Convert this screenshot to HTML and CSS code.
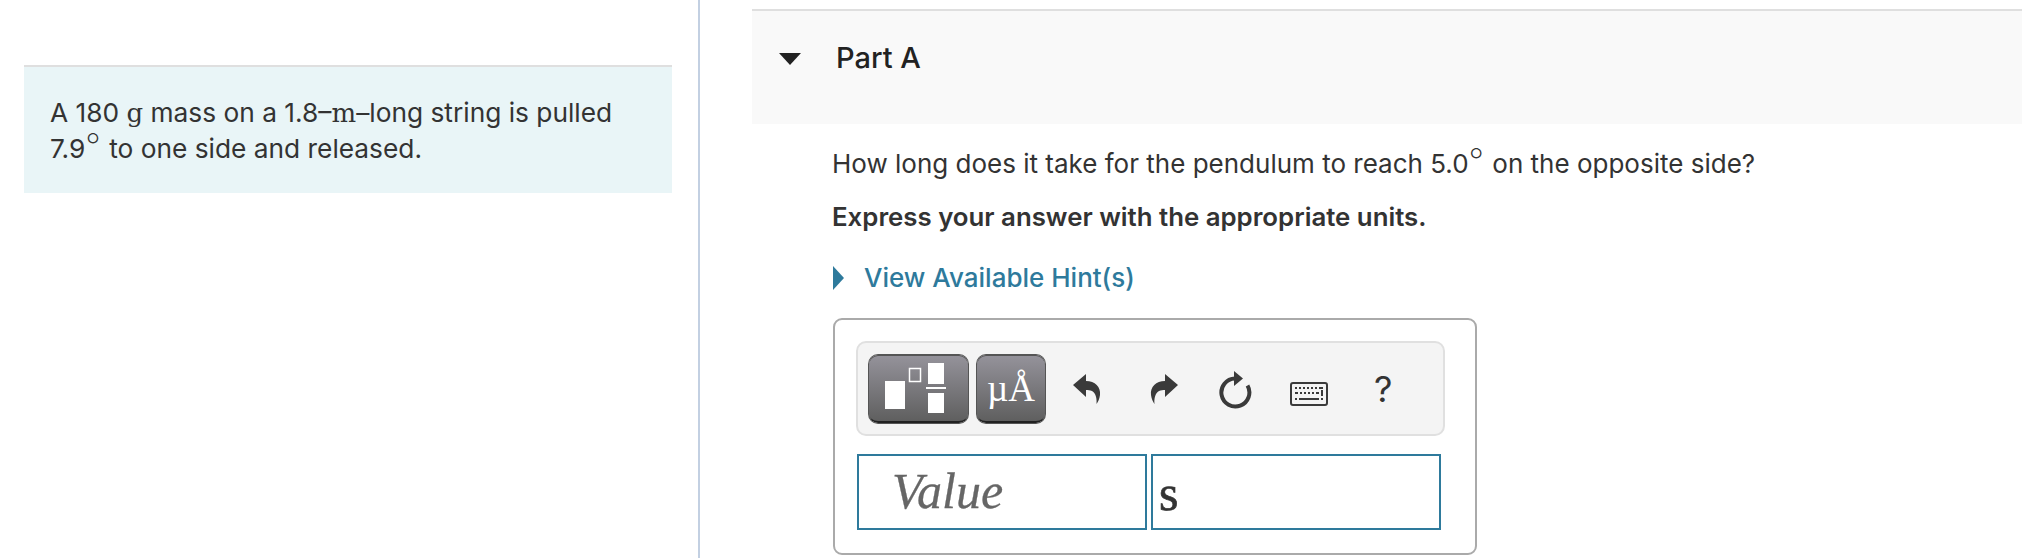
FILE: index.html
```html
<!DOCTYPE html>
<html lang="en">
<head>
    <meta charset="UTF-8">
    <meta name="viewport" content="width=device-width, initial-scale=1.0">
    <title>Part A</title>
    <link rel="stylesheet" href="styles.css">
</head>
<body>

    <div class="page">
        <!-- Problem intro -->
        <div class="intro-column">
            <div class="intro">
                A 180 <span class="math">g</span> mass on a 1.8–<span class="math">m</span>–long string is pulled
                7.9<span class="deg">°</span> to one side and released.
            </div>
        </div>

        <div class="part-column">
            <div class="part-header">
                <span class="caret-down"></span>
                <h2>Part A</h2>
            </div>

            <div class="part-body">
                <p class="question">How long does it take for the pendulum to reach 5.0<span class="deg">°</span> on the opposite side?</p>
                <p class="instruction">Express your answer with the appropriate units.</p>

                <a class="hint" href="#"><span class="caret-right"></span>View Available Hint(s)</a>

                <div class="answer-box">
                    <div class="toolbar">
                        <button class="tool tool-wide" aria-label="Templates">
                            <svg width="99" height="68" viewBox="0 0 99 68" fill="#fff">
                                <rect x="16" y="26" width="20" height="28"/>
                                <rect x="40.500" y="13.500" width="11" height="13" fill="none" stroke="#fff" stroke-width="1.5"/>
                                <rect x="59" y="8" width="16" height="21"/>
                                <rect x="57" y="32" width="20" height="2"/>
                                <rect x="59" y="38" width="16" height="20"/>
                            </svg>
                        </button>
                        <button class="tool tool-units">µÅ</button>

                        <svg class="icon icon-undo" width="30" height="32" viewBox="0 0 30 32" fill="#3a3a3a">
                            <path d="M1 12 L14 1 V8 C23 8 29 14 28 22 C27.500 26 26 29 24.500 31 C25 26 24 20 20 18 C18 17 16 17 14 17 V24 Z"/>
                        </svg>
                        <svg class="icon icon-redo" width="30" height="32" viewBox="0 0 30 32" fill="#3a3a3a">
                            <path d="M29 12 L16 1 V8 C7 8 1 14 2 22 C2.500 26 4 29 5.500 31 C5 26 6 20 10 18 C12 17 14 17 16 17 V24 Z"/>
                        </svg>
                        <svg class="icon icon-reset" width="34" height="40" viewBox="0 0 34 40" fill="none">
                            <path d="M17 9.500 A14 14 0 1 0 29.500 16.500" stroke="#3a3a3a" stroke-width="4"/>
                            <path d="M16 2 L25 9.500 L16 17 Z" fill="#3a3a3a"/>
                        </svg>
                        <svg class="icon icon-keyboard" width="38" height="24" viewBox="0 0 38 24" fill="#3a3a3a">
                            <rect x="1" y="1" width="36" height="22" rx="2" fill="none" stroke="#3a3a3a" stroke-width="2"/>
                            <path d="M5 5h2v2H5zM9 5h2v2H9zM13 5h2v2h-2zM17 5h2v2h-2zM21 5h2v2h-2zM25 5h2v2h-2zM29 5h4v2h-4z"/>
                            <path d="M5 10h3v2H5zM10 10h2v2h-2zM14 10h2v2h-2zM18 10h2v2h-2zM22 10h2v2h-2zM26 10h3v2h-3zM31 8h2v6h-2z"/>
                            <path d="M5 16h2v2H5zM9 16h20v2H9zM31 16h2v2h-2z"/>
                        </svg>
                        <span class="help">?</span>
                    </div>

                    <div class="answer-fields">
                        <div class="field field-value">Value</div>
                        <div class="field field-units">s</div>
                    </div>
                </div>
            </div>
        </div>
    </div>

</body>
</html>
```

FILE: styles.css
```css
body {
    margin: 0;
    font-family: Inter, "Liberation Sans", sans-serif;
    color: #333;
    background-color: #fff;
    overflow: hidden;
}

.page {
    display: flex;
    height: 558px;
}

.intro-column {
    width: 700px;
    box-sizing: border-box;
    padding: 65px 26px 0 24px;
    border-right: 2px solid #c3d0e2;
    flex-shrink: 0;
}

.intro {
    background-color: #e9f5f7;
    border-top: 2px solid #dfdfdf;
    padding: 28px 26px 24px;
    font-size: 26.3px;
    line-height: 36px;
    height: 74px;
}

.math {
    font-family: "DejaVu Serif", serif;
    font-size: 26px;
    line-height: 0;
}

.deg {
    font-size: 34px;
    line-height: 0;
    margin-right: 1px;
    font-weight: 200;
}

.part-column {
    flex: 1;
    padding: 9px 0 0 52px;
}

.part-header {
    display: flex;
    align-items: flex-start;
    height: 113px;
    background-color: #f9f9f9;
    border-top: 2px solid #dfdfdf;
}

.part-header h2 {
    margin: 31px 0 0 35px;
    font-size: 29px;
    line-height: 32px;
    font-weight: 500;
    color: #222;
}

.caret-down {
    width: 0;
    height: 0;
    margin: 42px 0 0 27px;
    border-left: 11px solid transparent;
    border-right: 11px solid transparent;
    border-top: 12px solid #222;
}

.part-body {
    padding: 0 0 0 80px;
}

.question {
    margin: 21px 0 0;
    font-size: 26px;
    line-height: 37px;
}

.instruction {
    margin: 16px 0 0;
    font-size: 25.8px;
    line-height: 37px;
    font-weight: 600;
}

.hint {
    display: flex;
    align-items: center;
    margin-top: 24px;
    font-size: 26px;
    line-height: 37px;
    font-weight: 500;
    color: #2e7a9c;
    text-decoration: none;
}

.caret-right {
    width: 0;
    height: 0;
    margin: 0 20px 0 1px;
    border-top: 12px solid transparent;
    border-bottom: 12px solid transparent;
    border-left: 11px solid #2e7a9c;
}

.answer-box {
    width: 644px;
    height: 237px;
    box-sizing: border-box;
    margin: 22px 0 0 1px;
    padding: 21px 30px 0 21px;
    border: 2px solid #aaa;
    border-radius: 9px;
}

.toolbar {
    display: flex;
    align-items: center;
    width: 589px;
    height: 95px;
    box-sizing: border-box;
    padding: 0 11px;
    background-color: #f4f4f4;
    border: 2px solid #e0e0e0;
    border-radius: 10px;
}

.tool {
    height: 68px;
    padding: 0;
    border: 0;
    border-bottom: 2px solid #222;
    border-radius: 9px;
    background: linear-gradient(#95939b, #5f5f5f);
    box-shadow: inset 0 1px 0 #555, 0 0 0 1px #555;
    color: #fff;
    box-sizing: border-box;
}

.tool svg {
    display: block;
}

.tool-wide {
    width: 99px;
}

.tool-units {
    width: 68px;
    margin-left: 9px;
    font-family: "Liberation Serif", serif;
    font-size: 37px;
    line-height: 60px;
    padding-top: 2px;
}

.icon {
    flex-shrink: 0;
}

.icon-undo {
    margin-left: 27px;
}

.icon-redo {
    margin-left: 47px;
}

.icon-reset {
    margin-left: 39px;
}

.icon-keyboard {
    margin: 10px 0 0 38px;
}

.help {
    margin-left: 46px;
    font-size: 36px;
    color: #333;
}

.answer-fields {
    display: flex;
    gap: 4px;
    margin: 18px 0 0 1px;
}

.field {
    width: 290px;
    height: 76px;
    box-sizing: border-box;
    border: 2px solid #2e7a9c;
    font-family: "Liberation Serif", serif;
    line-height: 70px;
}

.field-value {
    padding-left: 33px;
    font-size: 50px;
    font-style: italic;
    color: #666;
    -webkit-text-stroke: 0.3px #666;
}

.field-units {
    padding-left: 6px;
    font-size: 50px;
    line-height: 74px;
    color: #333;
    -webkit-text-stroke: 0.7px #333;
}
```
